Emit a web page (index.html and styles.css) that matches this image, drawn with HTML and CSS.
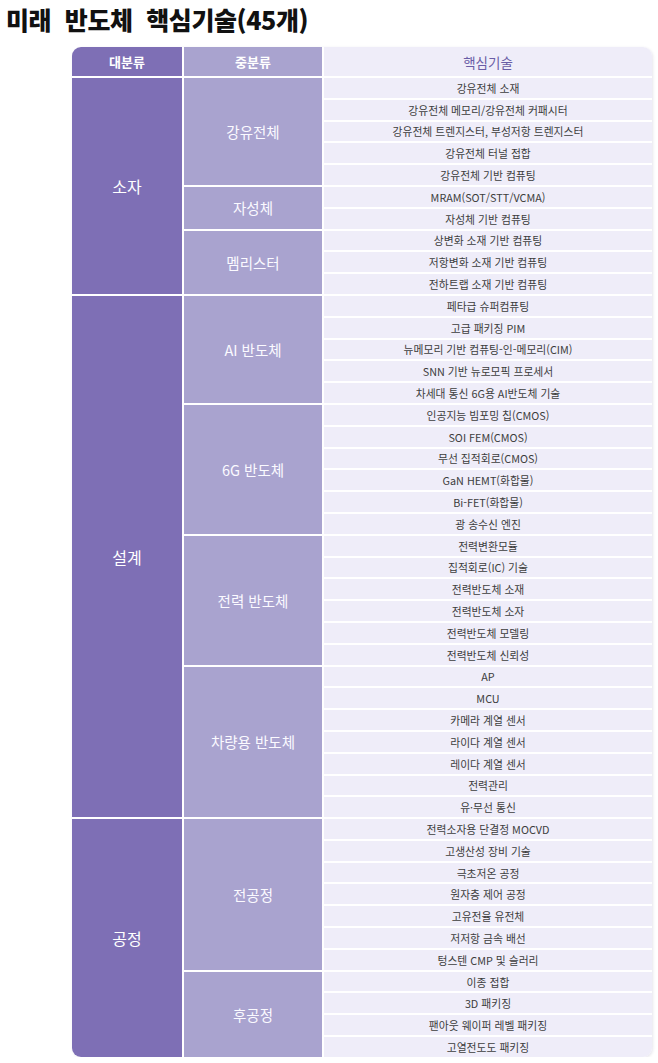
FILE: index.html
```html
<!DOCTYPE html>
<html lang="ko">
<head>
<meta charset="utf-8">
<title>미래 반도체 핵심기술(45개)</title>
<link rel="stylesheet" href="styles.css">
</head>
<body>
<h1 class="title">미래 반도체 핵심기술(45개)</h1>
<div class="table">
  <div class="head">
    <div class="h-major">대분류</div>
    <div class="h-minor">중분류</div>
    <div class="h-items">핵심기술</div>
  </div>

  <div class="group">
    <div class="major">소자</div>
    <div class="subs">
      <div class="sub">
        <div class="minor">강유전체</div>
        <div class="items">
          <div class="item">강유전체 소재</div>
          <div class="item">강유전체 메모리/강유전체 커패시터</div>
          <div class="item">강유전체 트렌지스터, 부성저항 트렌지스터</div>
          <div class="item">강유전체 터널 접합</div>
          <div class="item">강유전체 기반 컴퓨팅</div>
        </div>
      </div>
      <div class="sub">
        <div class="minor">자성체</div>
        <div class="items">
          <div class="item">MRAM(SOT/STT/VCMA)</div>
          <div class="item">자성체 기반 컴퓨팅</div>
        </div>
      </div>
      <div class="sub">
        <div class="minor">멤리스터</div>
        <div class="items">
          <div class="item">상변화 소재 기반 컴퓨팅</div>
          <div class="item">저항변화 소재 기반 컴퓨팅</div>
          <div class="item">전하트랩 소재 기반 컴퓨팅</div>
        </div>
      </div>
    </div>
  </div>

  <div class="group">
    <div class="major">설계</div>
    <div class="subs">
      <div class="sub">
        <div class="minor">AI 반도체</div>
        <div class="items">
          <div class="item">페타급 슈퍼컴퓨팅</div>
          <div class="item">고급 패키징 PIM</div>
          <div class="item">뉴메모리 기반 컴퓨팅-인-메모리(CIM)</div>
          <div class="item">SNN 기반 뉴로모픽 프로세서</div>
          <div class="item">차세대 통신 6G용 AI반도체 기술</div>
        </div>
      </div>
      <div class="sub">
        <div class="minor">6G 반도체</div>
        <div class="items">
          <div class="item">인공지능 빔포밍 칩(CMOS)</div>
          <div class="item">SOI FEM(CMOS)</div>
          <div class="item">무선 집적회로(CMOS)</div>
          <div class="item">GaN HEMT(화합물)</div>
          <div class="item">Bi-FET(화합물)</div>
          <div class="item">광 송수신 엔진</div>
        </div>
      </div>
      <div class="sub">
        <div class="minor">전력 반도체</div>
        <div class="items">
          <div class="item">전력변환모듈</div>
          <div class="item">집적회로(IC) 기술</div>
          <div class="item">전력반도체 소재</div>
          <div class="item">전력반도체 소자</div>
          <div class="item">전력반도체 모델링</div>
          <div class="item">전력반도체 신뢰성</div>
        </div>
      </div>
      <div class="sub">
        <div class="minor">차량용 반도체</div>
        <div class="items">
          <div class="item">AP</div>
          <div class="item">MCU</div>
          <div class="item">카메라 계열 센서</div>
          <div class="item">라이다 계열 센서</div>
          <div class="item">레이다 계열 센서</div>
          <div class="item">전력관리</div>
          <div class="item">유·무선 통신</div>
        </div>
      </div>
    </div>
  </div>

  <div class="group">
    <div class="major">공정</div>
    <div class="subs">
      <div class="sub">
        <div class="minor">전공정</div>
        <div class="items">
          <div class="item">전력소자용 단결정 MOCVD</div>
          <div class="item">고생산성 장비 기술</div>
          <div class="item">극초저온 공정</div>
          <div class="item">원자층 제어 공정</div>
          <div class="item">고유전율 유전체</div>
          <div class="item">저저항 금속 배선</div>
          <div class="item">텅스텐 CMP 및 슬러리</div>
        </div>
      </div>
      <div class="sub">
        <div class="minor">후공정</div>
        <div class="items">
          <div class="item">이종 접합</div>
          <div class="item">3D 패키징</div>
          <div class="item">팬아웃 웨이퍼 레벨 패키징</div>
          <div class="item">고열전도도 패키징</div>
        </div>
      </div>
    </div>
  </div>
</div>
</body>
</html>
```
FILE: styles.css
```css
html, body {
  margin: 0;
  padding: 0;
  background: #ffffff;
}
body {
  font-family: "Noto Sans CJK KR", "Noto Sans", sans-serif;
  color: #333333;
}
.title {
  margin: 0 0 0 6px;
  height: 47px;
  font-size: 25px;
  font-weight: 900;
  line-height: 38px;
  color: #111111;
  letter-spacing: -0.4px;
  word-spacing: 7px;
}
.table {
  margin-left: 72px;
  width: 580px;
  display: flex;
  flex-direction: column;
  gap: 2px;
  border-radius: 9px;
  overflow: hidden;
  background: #ffffff;
  box-shadow: 1px 1px 3px rgba(60, 50, 110, 0.12);
}
.head {
  display: flex;
  gap: 2px;
  height: 29px;
}
.h-major, .h-minor, .h-items {
  display: flex;
  align-items: center;
  justify-content: center;
  font-size: 13px;
}
.h-major {
  width: 110px;
  background: #7e6fb5;
  color: #ffffff;
  font-weight: 700;
}
.h-minor {
  width: 138px;
  background: #a9a3cf;
  color: #ffffff;
  font-weight: 700;
}
.h-items {
  flex: 1;
  background: #efedf9;
  color: #6a5da6;
  font-size: 13.5px;
}
.group {
  display: flex;
  gap: 2px;
}
.major {
  width: 110px;
  flex: none;
  background: #7e6fb5;
  color: #ffffff;
  font-size: 16px;
  display: flex;
  align-items: center;
  justify-content: center;
}
.subs {
  flex: 1;
  display: flex;
  flex-direction: column;
  gap: 2px;
}
.sub {
  display: flex;
  gap: 2px;
}
.minor {
  width: 138px;
  flex: none;
  background: #a9a3cf;
  color: #fbfaff;
  font-size: 14.5px;
  display: flex;
  align-items: center;
  justify-content: center;
}
.items {
  flex: 1;
  display: flex;
  flex-direction: column;
  gap: 2px;
}
.item {
  height: 19.8px;
  background: #efedf9;
  display: flex;
  align-items: center;
  justify-content: center;
  font-size: 10.8px;
  color: #3d3d3d;
  white-space: nowrap;
}
```
